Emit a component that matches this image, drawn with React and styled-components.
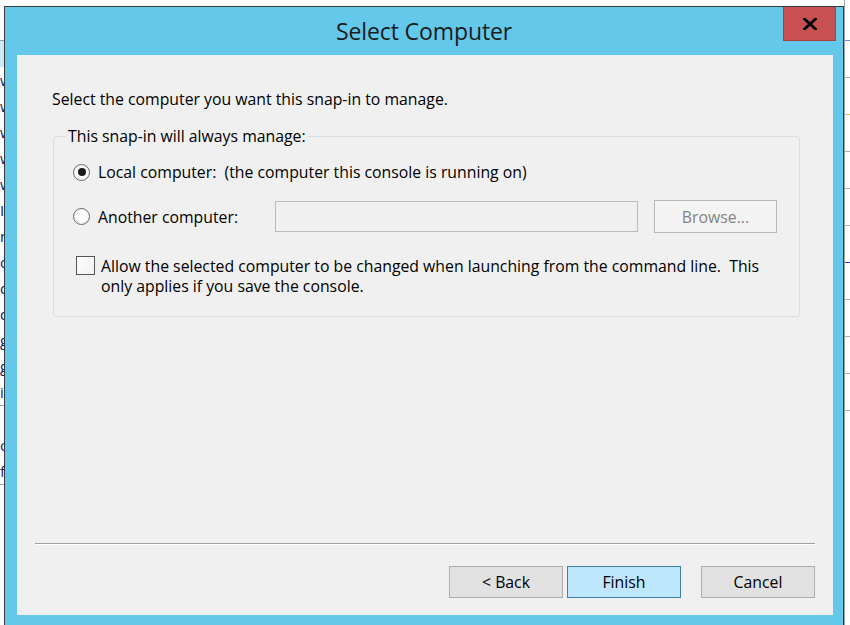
import React from 'react'
import styled, { createGlobalStyle } from 'styled-components'

const GlobalStyle = createGlobalStyle`
  html, body {
    margin: 0;
    padding: 0;
    background: #fff;
  }
  body {
    font-family: "Open Sans", "Noto Sans", "Liberation Sans", sans-serif;
    font-size: 15.8px;
    color: #000;
  }
`

const Desktop = styled.div`
  position: relative;
  width: 850px;
  height: 625px;
  overflow: hidden;
  background: #fff;
`

// what is left of the console window behind the dialog
const Backdrop = styled.div`
  display: flex;
  justify-content: space-between;
  height: 100%;
`

const LeftPane = styled.div`
  width: 4px;
  overflow: hidden;
  display: flex;
  flex-direction: column;
`

const PaneHeader = styled.div`
  height: 40px;
  border-bottom: 1px solid #a0a0a0;
`

const PaneRow = styled.div`
  height: 26px;
  line-height: 26px;
  font-size: 15px;
  white-space: nowrap;
  color: ${p => (p.$selected ? '#1a4a8a' : '#1b1b5e')};
  background: ${p => (p.$selected ? '#cde8f6' : 'transparent')};
  border-bottom: ${p => (p.$divider ? '1px solid #a0a0a0' : 'none')};
`

const RightPane = styled.div`
  width: 5px;
  border-left: 1px solid #a0a0a0;
  display: flex;
  flex-direction: column;
  padding-top: 40px;
  gap: 36px;
`

const Tick = styled.div`
  height: 1px;
  background: ${p => p.$color || '#b0b0b0'};
`

const Dialog = styled.div`
  position: absolute;
  left: 4px;
  top: 6px;
  width: 838px;
  height: 630px;
  border: 1px solid #3a3a3a;
  background: #64c8ea;
  display: flex;
  flex-direction: column;
`

const TitleBar = styled.div`
  position: relative;
  height: 48px;
  display: flex;
  align-items: center;
  justify-content: center;
`

const Title = styled.div`
  font-size: 23px;
  color: #1c1c1c;
  letter-spacing: -0.1px;
`

const CloseButton = styled.button`
  position: absolute;
  top: 0;
  right: 7px;
  width: 53px;
  height: 34px;
  padding: 0;
  border: 1px solid #a8413c;
  border-top: none;
  background: #c75050;
  display: flex;
  align-items: center;
  justify-content: center;
`

const Client = styled.div`
  margin: 0 10px 0 12px;
  height: 560px;
  background: #f0f0f0;
  display: flex;
  flex-direction: column;
  box-sizing: border-box;
  padding-bottom: 17px;
`

const Intro = styled.div`
  margin: 34px 0 0 35px;
  line-height: 20px;
`

const GroupBox = styled.fieldset`
  margin: 17px 0 0 36px;
  width: 747px;
  box-sizing: border-box;
  border: 1px solid #d6e0e6;
  border-radius: 3px;
  padding: 15px 20px 20px 19px;
  min-width: 0;
`

const Legend = styled.legend`
  margin-left: -7px;
  padding: 0 2px;
  line-height: 20px;
`

const OptionRow = styled.label`
  display: flex;
  align-items: center;
  height: ${p => p.$height || 22}px;
  margin-top: ${p => p.$gap || 0}px;
`

const Radio = styled.span`
  width: 17px;
  height: 17px;
  box-sizing: border-box;
  border-radius: 50%;
  border: 1px solid #686868;
  background: radial-gradient(circle, #ffffff 40%, #e8e8e8 100%);
  display: flex;
  align-items: center;
  justify-content: center;
  flex: none;
  &::after {
    content: '';
    width: 8px;
    height: 8px;
    border-radius: 50%;
    background: ${p => (p.$checked ? '#1a1a1a' : 'transparent')};
  }
`

const OptionText = styled.span`
  margin-left: 8px;
  width: ${p => (p.$width ? `${p.$width}px` : 'auto')};
  flex: none;
  white-space: pre;
`

const TextBox = styled.div`
  width: 363px;
  height: 31px;
  box-sizing: border-box;
  border: 1px solid #bcbcbc;
  background: #f0f0f0;
`

const Button = styled.button`
  width: ${p => p.$width || 114}px;
  height: ${p => p.$height || 32}px;
  box-sizing: border-box;
  padding: 0;
  font-family: inherit;
  font-size: 15.8px;
  color: ${p => (p.$disabled ? '#838383' : '#000')};
  background: ${p => (p.$primary ? '#bee6fd' : p.$disabled ? '#f4f4f4' : '#e1e1e1')};
  border: 1px solid ${p => (p.$primary ? '#3c7fb1' : p.$disabled ? '#b8b8b8' : '#adadad')};
`

const BrowseButton = styled(Button)`
  margin-left: 16px;
`

const CheckRow = styled.label`
  display: flex;
  align-items: flex-start;
  margin-top: 23px;
  padding-left: 3px;
`

const CheckBox = styled.span`
  width: 19px;
  height: 19px;
  box-sizing: border-box;
  border: 1px solid #555;
  background: linear-gradient(135deg, #fdfdfd, #f2f2f2);
  flex: none;
`

const CheckText = styled.span`
  margin-left: 6px;
  line-height: 20px;
  width: 670px;
`

const Spacer = styled.div`
  flex: 1;
`

const Separator = styled.div`
  margin: 0 18px;
  border-top: 1px solid #a0a0a0;
  border-bottom: 1px solid #fff;
`

const Footer = styled.div`
  display: flex;
  justify-content: flex-end;
  margin: 21px 18px 0 0;
`

const CancelButton = styled(Button)`
  margin-left: 20px;
`

const FinishButton = styled(Button)`
  margin-left: 4px;
`

const paneRows = [
  { t: '', sel: true },
  { t: 'w' }, { t: 'w' }, { t: 'w' }, { t: 'w' }, { t: 'w' },
  { t: 'I' }, { t: 'n' }, { t: 'd' }, { t: 'd' }, { t: 'd' },
  { t: 'g' }, { t: 'g' }, { t: 'i', divider: true },
  { t: '' }, { t: 'o' }, { t: 'f', divider: true },
]

export default function App() {
  return (
    <>
      <GlobalStyle />
      <Desktop>
        <Backdrop>
          <LeftPane>
            <PaneHeader />
            {paneRows.map((r, i) => (
              <PaneRow key={i} $selected={r.sel} $divider={r.divider}>{r.t}</PaneRow>
            ))}
          </LeftPane>
          <RightPane>
            <Tick $color="#6a8fd0" />
            <Tick />
            <Tick $color="#e8c060" />
            <Tick />
            <Tick />
            <Tick />
            <Tick $color="#3040a0" />
            <Tick />
            <Tick />
            <Tick />
            <Tick />
          </RightPane>
        </Backdrop>

        <Dialog>
          <TitleBar>
            <Title>Select Computer</Title>
            <CloseButton aria-label="Close">
              <svg width="14" height="12" viewBox="0 0 14 12">
                <path d="M1.5 1 L12.5 11 M12.5 1 L1.5 11" stroke="#000" strokeWidth="2.8" strokeLinecap="square" />
              </svg>
            </CloseButton>
          </TitleBar>

          <Client>
            <Intro>Select the computer you want this snap-in to manage.</Intro>

            <GroupBox>
              <Legend>This snap-in will always manage:</Legend>

              <OptionRow>
                <Radio $checked />
                <OptionText>{'Local computer:  (the computer this console is running on)'}</OptionText>
              </OptionRow>

              <OptionRow $height={33} $gap={17}>
                <Radio />
                <OptionText $width={177}>Another computer:</OptionText>
                <TextBox />
                <BrowseButton $width={123} $height={33} $disabled>Browse...</BrowseButton>
              </OptionRow>

              <CheckRow>
                <CheckBox />
                <CheckText>
                  Allow the selected computer to be changed when launching from the command line.&nbsp; This only applies if you save the console.
                </CheckText>
              </CheckRow>
            </GroupBox>

            <Spacer />
            <Separator />
            <Footer>
              <Button>&lt; Back</Button>
              <FinishButton $primary>Finish</FinishButton>
              <CancelButton>Cancel</CancelButton>
            </Footer>
          </Client>
        </Dialog>
      </Desktop>
    </>
  )
}
